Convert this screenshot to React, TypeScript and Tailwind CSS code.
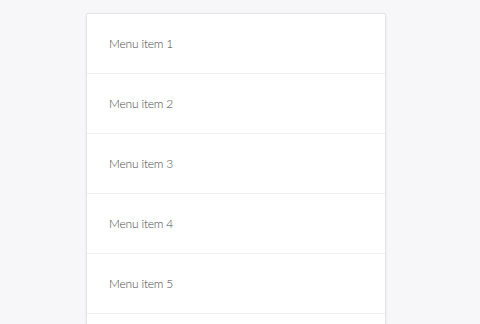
import React from "react";

export default function App() {
  const items = ["Menu item 1", "Menu item 2", "Menu item 3", "Menu item 4", "Menu item 5", "Menu item 6"];
  return (
    <div className="w-[480px] h-[324px] overflow-hidden bg-[#f7f7f9] pt-[13px]" style={{ fontFamily: "Lato, 'Open Sans', sans-serif" }}>
      <div className="ml-[86px] w-[300px] bg-white border border-[#e3e3e6] rounded-[2px] shadow-[0_1px_3px_rgba(0,0,0,0.06)]">
        {items.map((t) => (
          <div key={t} className="h-[60px] flex items-center pl-[22px] border-b border-[#efeff1] text-[12px] font-light text-[#4a4a4a] tracking-[-0.2px]">
            {t}
          </div>
        ))}
      </div>
    </div>
  );
}
